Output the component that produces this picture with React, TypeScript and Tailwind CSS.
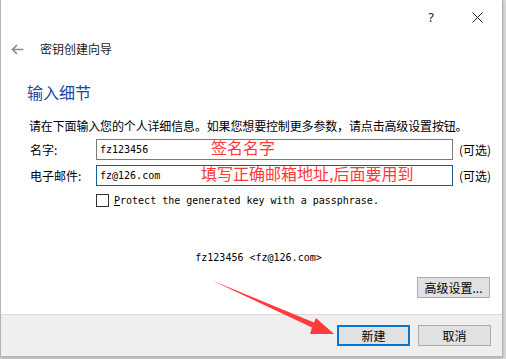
import React from "react";

const cjk = "font-['Microsoft_YaHei','Noto_Sans_CJK_SC',sans-serif]";
const mono = "font-['DejaVu_Sans_Mono','Noto_Sans_CJK_SC',monospace]";

function WinButton({ label, primary }: { label: string; primary?: boolean }) {
	return (
		<button
			className={`w-[73px] h-[21px] flex items-center justify-center text-[12px] leading-none text-black bg-[#e1e1e1] ${
				primary ? "border-2 border-[#0078d7]" : "border border-[#adadad]"
			}`}
		>
			{label}
		</button>
	);
}

export default function App() {
	return (
		<div className={`w-[506px] h-[359px] bg-[#dcdcdc] relative overflow-hidden ${cjk}`}>
			<div className="w-[503px] h-[357px] bg-white border-l border-r border-b border-[#b4b4b4] flex flex-col shadow-[0_1px_3px_rgba(0,0,0,0.25)]">
				{/* caption */}
				<div className="h-[35px] flex items-center justify-end text-[#222]">
					<span className="text-[13px] mr-[38px] font-['Segoe_UI','Noto_Sans',sans-serif]">?</span>
					<svg width="11" height="11" viewBox="0 0 11 11" className="mr-[19px]">
						<path d="M0.5 0.5 L10.5 10.5 M10.5 0.5 L0.5 10.5" stroke="#222" strokeWidth="1" />
					</svg>
				</div>

				{/* wizard title */}
				<div className="h-[28px] flex items-center pl-[10px]">
					<svg width="13" height="11" viewBox="0 0 13 11">
						<path d="M1 5.5 H12.5 M6 1 L1.5 5.5 L6 10" stroke="#8a8a8a" strokeWidth="1.6" fill="none" />
					</svg>
					<span className="ml-[16px] text-[12px] leading-[16px] text-[#1a1a1a]">密钥创建向导</span>
				</div>

				<div className="pl-[26px] pr-[10px] flex flex-col">
					<h1 className="mt-[19px] text-[16px] leading-[20px] text-[#1a47a8]">输入细节</h1>
					<p className="mt-[16px] pl-[2px] text-[12px] leading-[16px] text-black tracking-[-0.15px] whitespace-nowrap">
						请在下面输入您的个人详细信息。如果您想要控制更多参数，请点击高级设置按钮。
					</p>

					<div className="mt-[5px] flex items-center h-[21px]">
						<span className="w-[69px] pl-[3px] text-[12px]">名字:</span>
						<div className={`w-[357px] h-[21px] border border-[#7a7a7a] flex items-center pl-[3px] text-[10px] ${mono}`}>
							fz123456
						</div>
						<span className="ml-[6px] text-[12px]">(可选)</span>
					</div>

					<div className="mt-[5px] flex items-center h-[21px]">
						<span className="w-[69px] pl-[3px] text-[12px]">电子邮件:</span>
						<div className={`w-[357px] h-[21px] border border-[#1a5a96] flex items-center pl-[3px] text-[10px] ${mono}`}>
							fz@126.com
						</div>
						<span className="ml-[6px] text-[12px]">(可选)</span>
					</div>

					<div className="mt-[8px] ml-[69px] flex items-center h-[13px]">
						<div className="w-[13px] h-[13px] border border-[#333] bg-white" />
						<span className={`ml-[5px] text-[10px] ${mono}`}>
							<span className="underline">P</span>rotect the generated key with a passphrase.
						</span>
					</div>

					<div className={`mt-[44px] text-center text-[10px] leading-[14px] pr-[2px] ${mono}`}>
						fz123456 &lt;fz@126.com&gt;
					</div>

					<div className="mt-[12px] flex justify-end pr-[2px]">
						<button className="w-[73px] h-[21px] flex items-center justify-center text-[12px] leading-none bg-[#e1e1e1] border border-[#adadad]">
							高级设置...
						</button>
					</div>
				</div>

				<div className="mt-auto h-[42px] bg-[#efefef] border-t border-[#dadada] flex items-center justify-end gap-[8px] pr-[11px]">
					<WinButton label="新建" primary />
					<WinButton label="取消" />
				</div>
			</div>

			{/* annotations */}
			<span className="absolute left-[211px] top-[137px] text-[16px] leading-[20px] text-[#ff3838] whitespace-nowrap">签名名字</span>
			<span className="absolute left-[201px] top-[163px] text-[16px] leading-[20px] text-[#ff3838] whitespace-nowrap">
				填写正确邮箱地址,后面要用到
			</span>
			<svg className="absolute left-0 top-0" width="506" height="359" viewBox="0 0 506 359">
				<polygon points="211,280 314,322.5 316,318 334,334 310,334 312,327.5" fill="#ff3b3b" />
			</svg>
		</div>
	);
}
